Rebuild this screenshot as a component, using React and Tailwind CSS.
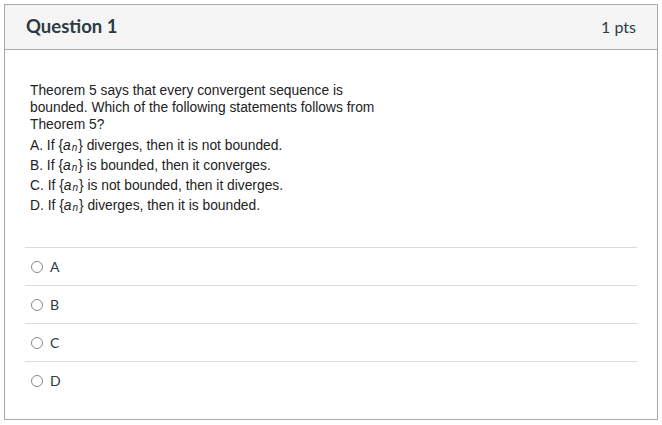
const options = ["A", "B", "C", "D"];

const Seq = () => (
  <span>
    {"{"}
    <i>a</i>
    <sub className="text-[10px] italic relative top-[1px] pl-[1px] pr-[1px]">n</sub>
    {"}"}
  </span>
);

const App = () => {
  return (
    <div className="w-[662px] h-[425px] bg-white pt-[4px] pl-[4px]">
      <div className="w-[654px] h-[416px] border border-[#a9a9a9] flex flex-col">
        {/* Header */}
        <div className="h-[45px] shrink-0 bg-[#f5f5f5] border-b border-[#a9a9a9] flex items-center justify-between pl-[21px] pr-[21px] font-['Lato',sans-serif] text-[#2d3b45]">
          <h2 className="text-[18.5px] font-bold">Question 1</h2>
          <span className="text-[16px]">1 pts</span>
        </div>

        {/* Body */}
        <div className="px-[20px] pt-[32px]">
          <div className="pl-[5px] font-['Liberation_Sans',Arial,sans-serif] text-[13.8px] text-[#222]">
            <p className="leading-[17px] w-[360px]">
              Theorem 5 says that every convergent sequence is bounded. Which of the following statements follows from
              Theorem 5?
            </p>
            <div className="mt-[3px] leading-[20px]">
              <p>A. If <Seq /> diverges, then it is not bounded.</p>
              <p>B. If <Seq /> is bounded, then it converges.</p>
              <p>C. If <Seq /> is not bounded, then it diverges.</p>
              <p>D. If <Seq /> diverges, then it is bounded.</p>
            </div>
          </div>

          <div className="mt-[31px]">
            {options.map((o) => (
              <div
                key={o}
                className="h-[38px] border-t border-[#dcdcdc] flex items-center pl-[6px] gap-[7px] font-['Lato',sans-serif] text-[14px] text-[#2d3b45]"
              >
                <span className="w-[12px] h-[12px] rounded-full border border-[#8a8a8a] bg-white" />
                <span>{o}</span>
              </div>
            ))}
          </div>
        </div>
      </div>
    </div>
  );
};

export default App;
